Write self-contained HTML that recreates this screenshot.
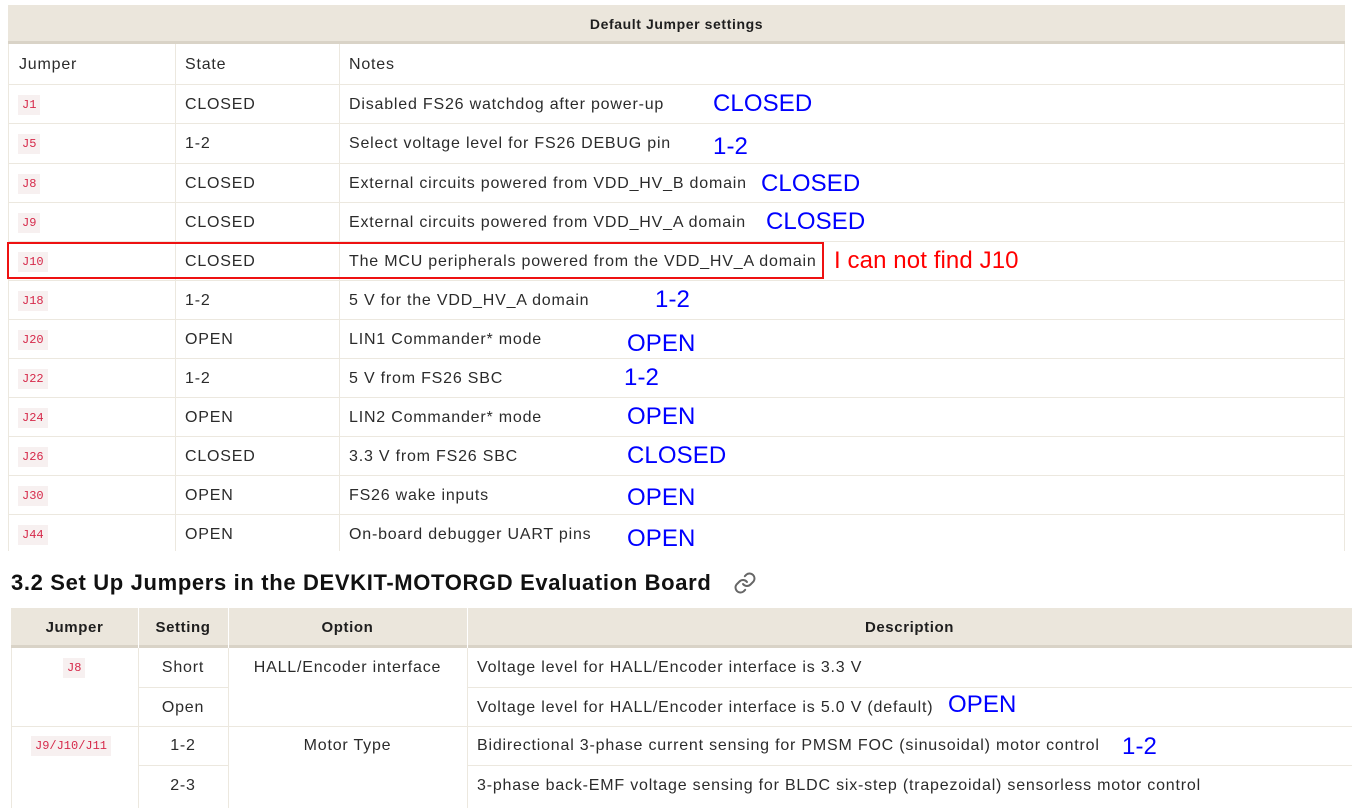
<!DOCTYPE html>
<html><head><meta charset="utf-8"><style>
*{margin:0;padding:0;box-sizing:border-box}
body{width:1352px;height:806px;background:#fff;position:relative;overflow:hidden;font-family:"Liberation Sans",sans-serif;color:#2b2b2b;font-size:16px;letter-spacing:0.8px}
.a{position:absolute}
.hl{position:absolute;height:1px;background:#ece8df}
.vl{position:absolute;width:1px;background:#ece8df}
.t{position:absolute;white-space:nowrap;line-height:20px}
.c{position:absolute;font-family:"Liberation Mono",monospace;font-size:12px;color:#d6294a;background:#f7f0f0;padding:2px 4px;line-height:16px;letter-spacing:0}
.b{position:absolute;white-space:nowrap;color:#0000ff;font-size:24px;line-height:28px;letter-spacing:0.1px;font-family:"Liberation Sans","Noto Sans CJK KR",sans-serif}
.hdr{background:#ebe6dc}
.h{font-weight:bold;color:#1e1e1e;font-size:15px;letter-spacing:0.6px}
</style></head><body>
<!-- table 1 -->
<div class="a hdr" style="left:8px;top:5px;width:1337px;height:39px;border-bottom:3px solid #d9d3c7"></div>
<div class="t h" style="left:8px;top:14px;width:1337px;text-align:center;font-size:14px">Default Jumper settings</div>
<div class="vl" style="left:8px;top:44px;height:510px"></div>
<div class="vl" style="left:1344px;top:44px;height:510px"></div>
<div class="vl" style="left:175px;top:44px;height:510px"></div>
<div class="vl" style="left:339px;top:44px;height:510px"></div>

<div class="hl" style="left:8px;top:84px;width:1337px"></div>
<div class="hl" style="left:8px;top:123px;width:1337px"></div>
<div class="hl" style="left:8px;top:163px;width:1337px"></div>
<div class="hl" style="left:8px;top:202px;width:1337px"></div>
<div class="hl" style="left:8px;top:241px;width:1337px"></div>
<div class="hl" style="left:8px;top:280px;width:1337px"></div>
<div class="hl" style="left:8px;top:319px;width:1337px"></div>
<div class="hl" style="left:8px;top:358px;width:1337px"></div>
<div class="hl" style="left:8px;top:397px;width:1337px"></div>
<div class="hl" style="left:8px;top:436px;width:1337px"></div>
<div class="hl" style="left:8px;top:475px;width:1337px"></div>
<div class="hl" style="left:8px;top:514px;width:1337px"></div>

<div class="t" style="left:19px;top:55px">Jumper</div><div class="t" style="left:185px;top:55px">State</div><div class="t" style="left:349px;top:55px">Notes</div>

<div class="c" style="left:18px;top:95px">J1</div><div class="t" style="left:185px;top:95px">CLOSED</div><div class="t" style="left:349px;top:95px">Disabled FS26 watchdog after power-up</div>
<div class="c" style="left:18px;top:134px">J5</div><div class="t" style="left:185px;top:134px">1-2</div><div class="t" style="left:349px;top:134px">Select voltage level for FS26 DEBUG pin</div>
<div class="c" style="left:18px;top:174px">J8</div><div class="t" style="left:185px;top:174px">CLOSED</div><div class="t" style="left:349px;top:174px">External circuits powered from VDD_HV_B domain</div>
<div class="c" style="left:18px;top:213px">J9</div><div class="t" style="left:185px;top:213px">CLOSED</div><div class="t" style="left:349px;top:213px">External circuits powered from VDD_HV_A domain</div>
<div class="c" style="left:18px;top:252px">J10</div><div class="t" style="left:185px;top:252px">CLOSED</div><div class="t" style="left:349px;top:252px">The MCU peripherals powered from the VDD_HV_A domain</div>
<div class="c" style="left:18px;top:291px">J18</div><div class="t" style="left:185px;top:291px">1-2</div><div class="t" style="left:349px;top:291px">5 V for the VDD_HV_A domain</div>
<div class="c" style="left:18px;top:330px">J20</div><div class="t" style="left:185px;top:330px">OPEN</div><div class="t" style="left:349px;top:330px">LIN1 Commander* mode</div>
<div class="c" style="left:18px;top:369px">J22</div><div class="t" style="left:185px;top:369px">1-2</div><div class="t" style="left:349px;top:369px">5 V from FS26 SBC</div>
<div class="c" style="left:18px;top:408px">J24</div><div class="t" style="left:185px;top:408px">OPEN</div><div class="t" style="left:349px;top:408px">LIN2 Commander* mode</div>
<div class="c" style="left:18px;top:447px">J26</div><div class="t" style="left:185px;top:447px">CLOSED</div><div class="t" style="left:349px;top:447px">3.3 V from FS26 SBC</div>
<div class="c" style="left:18px;top:486px">J30</div><div class="t" style="left:185px;top:486px">OPEN</div><div class="t" style="left:349px;top:486px">FS26 wake inputs</div>
<div class="c" style="left:18px;top:525px">J44</div><div class="t" style="left:185px;top:525px">OPEN</div><div class="t" style="left:349px;top:525px">On-board debugger UART pins</div>
<div class="a" style="left:0;top:551px;width:1352px;height:14px;background:#fff"></div>

<div class="a" style="left:7px;top:242px;width:817px;height:37px;border:2px solid #ee1111"></div>
<div class="b" style="left:834px;top:247px;color:#ff0000">I can not find J10</div>
<div class="b" style="left:713px;top:90px">CLOSED</div>
<div class="b" style="left:713px;top:133px">1-2</div>
<div class="b" style="left:761px;top:170px">CLOSED</div>
<div class="b" style="left:766px;top:208px">CLOSED</div>
<div class="b" style="left:655px;top:286px">1-2</div>
<div class="b" style="left:627px;top:330px">OPEN</div>
<div class="b" style="left:624px;top:364px">1-2</div>
<div class="b" style="left:627px;top:403px">OPEN</div>
<div class="b" style="left:627px;top:442px">CLOSED</div>
<div class="b" style="left:627px;top:484px">OPEN</div>
<div class="b" style="left:627px;top:525px">OPEN</div>

<!-- heading -->
<div class="t" style="left:11px;top:569px;font-size:22px;line-height:28px;font-weight:bold;color:#111;letter-spacing:0.65px">3.2 Set Up Jumpers in the DEVKIT-MOTORGD Evaluation Board</div>
<svg class="a" style="left:733px;top:571px" width="24" height="24" viewBox="0 0 24 24" fill="none" stroke="#666" stroke-width="2" stroke-linecap="round"><path d="M10 13a5 5 0 0 0 7.5.5l3-3a5 5 0 0 0-7-7l-1.7 1.7"/><path d="M14 11a5 5 0 0 0-7.5-.5l-3 3a5 5 0 0 0 7 7l1.7-1.7"/></svg>

<!-- table 2 -->
<div class="a hdr" style="left:11px;top:608px;width:1341px;height:40px;border-bottom:3px solid #d9d3c7"></div>
<div class="a" style="left:138px;top:608px;width:1px;height:40px;background:#fff"></div>
<div class="a" style="left:228px;top:608px;width:1px;height:40px;background:#fff"></div>
<div class="a" style="left:467px;top:608px;width:1px;height:40px;background:#fff"></div>
<div class="t h" style="left:11px;top:618px;width:127px;text-align:center">Jumper</div>
<div class="t h" style="left:138px;top:618px;width:90px;text-align:center">Setting</div>
<div class="t h" style="left:228px;top:618px;width:239px;text-align:center">Option</div>
<div class="t h" style="left:467px;top:618px;width:885px;text-align:center">Description</div>
<div class="vl" style="left:11px;top:648px;height:160px"></div>
<div class="vl" style="left:138px;top:648px;height:160px"></div>
<div class="vl" style="left:228px;top:648px;height:160px"></div>
<div class="vl" style="left:467px;top:648px;height:160px"></div>
<div class="hl" style="left:138px;top:687px;width:90px"></div>
<div class="hl" style="left:467px;top:687px;width:885px"></div>
<div class="hl" style="left:11px;top:726px;width:1341px"></div>
<div class="hl" style="left:138px;top:765px;width:90px"></div>
<div class="hl" style="left:467px;top:765px;width:885px"></div>

<div class="c" style="left:63px;top:658px">J8</div>
<div class="c" style="left:31px;top:736px">J9/J10/J11</div>
<div class="t" style="left:138px;top:658px;width:90px;text-align:center">Short</div>
<div class="t" style="left:138px;top:698px;width:90px;text-align:center">Open</div>
<div class="t" style="left:138px;top:736px;width:90px;text-align:center">1-2</div>
<div class="t" style="left:138px;top:776px;width:90px;text-align:center">2-3</div>
<div class="t" style="left:228px;top:658px;width:239px;text-align:center">HALL/Encoder interface</div>
<div class="t" style="left:228px;top:736px;width:239px;text-align:center">Motor Type</div>
<div class="t" style="left:477px;top:658px">Voltage level for HALL/Encoder interface is 3.3 V</div>
<div class="t" style="left:477px;top:698px">Voltage level for HALL/Encoder interface is 5.0 V (default)</div>
<div class="t" style="left:477px;top:736px">Bidirectional 3-phase current sensing for PMSM FOC (sinusoidal) motor control</div>
<div class="t" style="left:477px;top:776px">3-phase back-EMF voltage sensing for BLDC six-step (trapezoidal) sensorless motor control</div>
<div class="b" style="left:948px;top:691px">OPEN</div>
<div class="b" style="left:1122px;top:733px">1-2</div>
</body></html>
